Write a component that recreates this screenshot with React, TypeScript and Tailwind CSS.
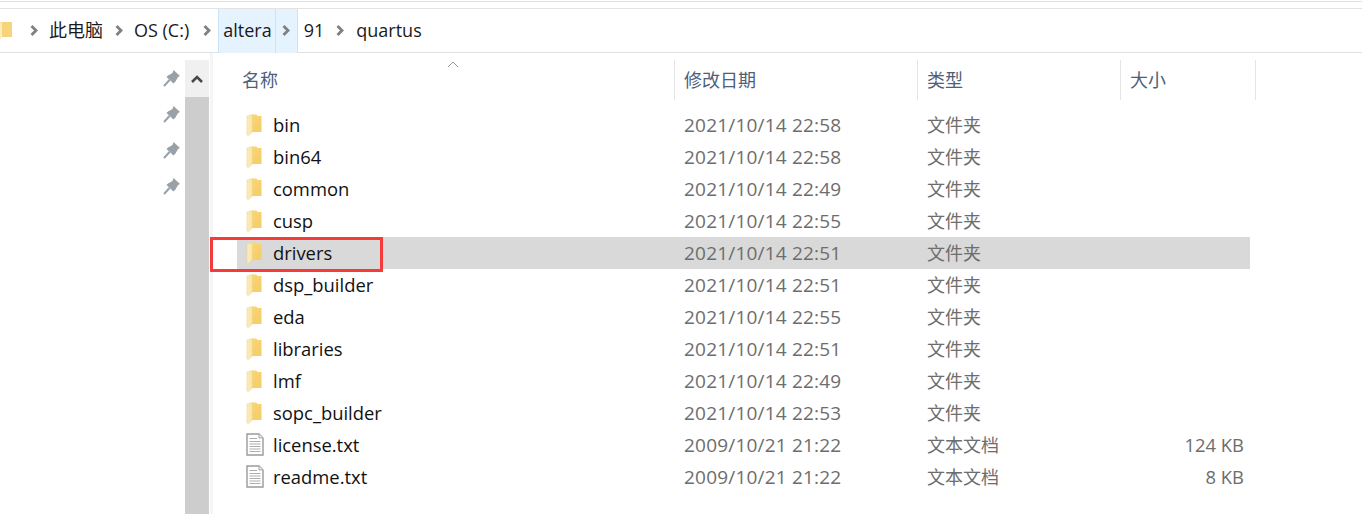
import React from 'react';

const uiFont = { fontFamily: '"Open Sans", "Noto Sans CJK SC", sans-serif' };

type Item = { name: string; date: string; type: string; size?: string; file?: boolean; selected?: boolean };

const items: Item[] = [
  { name: 'bin', date: '2021/10/14 22:58', type: '文件夹' },
  { name: 'bin64', date: '2021/10/14 22:58', type: '文件夹' },
  { name: 'common', date: '2021/10/14 22:49', type: '文件夹' },
  { name: 'cusp', date: '2021/10/14 22:55', type: '文件夹' },
  { name: 'drivers', date: '2021/10/14 22:51', type: '文件夹', selected: true },
  { name: 'dsp_builder', date: '2021/10/14 22:51', type: '文件夹' },
  { name: 'eda', date: '2021/10/14 22:55', type: '文件夹' },
  { name: 'libraries', date: '2021/10/14 22:51', type: '文件夹' },
  { name: 'lmf', date: '2021/10/14 22:49', type: '文件夹' },
  { name: 'sopc_builder', date: '2021/10/14 22:53', type: '文件夹' },
  { name: 'license.txt', date: '2009/10/21 21:22', type: '文本文档', size: '124 KB', file: true },
  { name: 'readme.txt', date: '2009/10/21 21:22', type: '文本文档', size: '8 KB', file: true },
];

const FolderIcon = () => (
  <svg width="16" height="22" viewBox="0 0 16 22" className="shrink-0">
    <defs>
      <linearGradient id="folderBody" x1="0" y1="0" x2="0.6" y2="1">
        <stop offset="0" stopColor="#f9d677" />
        <stop offset="1" stopColor="#f6cd66" />
      </linearGradient>
      <linearGradient id="folderFlap" x1="0" y1="0" x2="1" y2="0">
        <stop offset="0" stopColor="#fdeebc" />
        <stop offset="1" stopColor="#fbe29c" />
      </linearGradient>
    </defs>
    <path d="M6 0.5 H10.5 L11.5 2 H15.5 V18 H6 Z" fill="url(#folderBody)" />
    <path d="M1 2 L6.5 0.5 V18 L2.5 21.5 L1 21 Z" fill="url(#folderFlap)" stroke="#eccf85" strokeWidth="0.5" />
  </svg>
);

const FileIcon = () => (
  <svg width="18" height="23" viewBox="0 0 18 23" className="shrink-0">
    <path d="M1 1 H13 L17 5 V22 H1 Z" fill="#fff" stroke="#9a9a9a" strokeWidth="1.4" />
    <path d="M13 1 V5 H17" fill="#e8e8e8" stroke="#a8a8a8" />
    <path d="M3.5 5.5 H11 M3.5 8.5 H14.5 M3.5 11 H14.5 M3.5 13.5 H14.5 M3.5 16 H14.5 M3.5 18.5 H14.5" stroke="#adadad" strokeWidth="1.2" />
  </svg>
);

const PinIcon = () => (
  <svg width="18" height="18" viewBox="0 0 18 18">
    <path d="M10.5 1 L17 7 L15 8 L12.5 12.5 L10.5 14.5 L3.5 8 L5 6.5 L9.5 4 Z" fill="#98a0a8" />
    <path d="M6.5 11 L1 17" stroke="#98a0a8" strokeWidth="2" />
  </svg>
);

const Chevron = () => (
  <svg width="8" height="11" viewBox="0 0 8 11" className="shrink-0">
    <path d="M1.5 1 L6 5.5 L1.5 10" fill="none" stroke="#808080" strokeWidth="2.8" />
  </svg>
);

const HeaderCell = ({ label, width }: { label: string; width: string }) => (
  <div className={`${width} h-[40px] flex items-center pl-[9px] border-l border-[#e5e5e5] text-[18px] text-[#4c607a]`}>
    {label}
  </div>
);

const Row = ({ item }: { item: Item }) => (
  <div className={`relative h-[32px] w-[1013px] flex items-center ${item.selected ? 'bg-[#d9d9d9]' : ''}`}>
    <div className="w-[447px] flex items-center pl-[9px] text-[18.4px] text-[#111]">
      <div className="w-[27px] flex">{item.file ? <FileIcon /> : <FolderIcon />}</div>
      <span>{item.name}</span>
    </div>
    <div className="w-[243px] text-[19px] tracking-[0.2px] text-[#6d6d6d]">{item.date}</div>
    <div className="w-[203px] text-[18px] text-[#6d6d6d]">{item.type}</div>
    <div className="w-[114px] text-right text-[18.4px] text-[#6d6d6d]">{item.size}</div>
    {item.selected && (
      <div className="absolute left-[-27px] top-0 w-[173px] h-[35px] border-[3px] border-[#f53a3a]" />
    )}
  </div>
);

export default function App() {
  return (
    <div className="w-full h-[514px] bg-white overflow-hidden" style={uiFont}>
      <div className="h-[8px] border-t border-b border-[#e3e3e3] mt-px" />
      <div className="h-[44px] flex items-center border-b border-[#e0e0e0] text-[18px] text-[#1a1a1a]">
        <svg width="14" height="20" viewBox="0 0 14 20" className="shrink-0 -ml-[1px]">
          <path d="M0 1 H13 V16 H0 Z" fill="#f7d47c" />
          <path d="M0 3 L3 1 V16 L0 20 Z" fill="#fdeeb9" />
        </svg>
        <div className="ml-[17px]"><Chevron /></div>
        <span className="ml-[11px]">此电脑</span>
        <div className="ml-[12px]"><Chevron /></div>
        <span className="ml-[11px]">OS (C:)</span>
        <div className="ml-[14px]"><Chevron /></div>
        <div className="ml-[7px] h-[44px] flex border-x border-[#cde4f7] bg-[#e5f3ff]">
          <div className="pl-[4px] pr-[3px] flex items-center border-r border-[#cde4f7]">altera</div>
          <div className="w-[21px] flex items-center justify-center"><Chevron /></div>
        </div>
        <span className="ml-[6px]">91</span>
        <div className="ml-[12px]"><Chevron /></div>
        <span className="ml-[12px]">quartus</span>
      </div>

      <div className="flex">
        <div className="w-[185px] flex flex-col items-end pt-[16px] pr-[4px] gap-[18px]">
          <PinIcon />
          <PinIcon />
          <PinIcon />
          <PinIcon />
        </div>
        <div className="w-[24px] pt-[7px] flex flex-col shrink-0">
          <div className="h-[37px] bg-[#f0f0f0] flex items-center justify-center">
            <svg width="12" height="8" viewBox="0 0 12 8">
              <path d="M1 7 L6 2 L11 7" fill="none" stroke="#484848" strokeWidth="2.6" />
            </svg>
          </div>
          <div className="h-[420px] bg-[#cdcdcd]" />
        </div>
        <div className="flex-1 border-l-[3px] border-[#f5f5f5] ml-px">
          <div className="relative flex h-[47px] pt-[7px] ml-[-3px]">
            <div className="w-[29px]" />
            <div className="w-[435px] h-[40px] flex items-center pl-[3px] text-[18px] text-[#4c607a]">名称</div>
            <HeaderCell label="修改日期" width="w-[243px]" />
            <HeaderCell label="类型" width="w-[203px]" />
            <HeaderCell label="大小" width="w-[135px]" />
            <div className="h-[40px] border-l border-[#e5e5e5]" />
            <svg width="12" height="7" viewBox="0 0 12 7" className="absolute left-[237px] top-[8px]">
              <path d="M1 6 L6 1 L11 6" fill="none" stroke="#9a9a9a" strokeWidth="1" />
            </svg>
          </div>
          <div className="pl-[24px] pt-[9px]">
            {items.map((item) => (
              <Row key={item.name} item={item} />
            ))}
          </div>
        </div>
      </div>
    </div>
  );
}
